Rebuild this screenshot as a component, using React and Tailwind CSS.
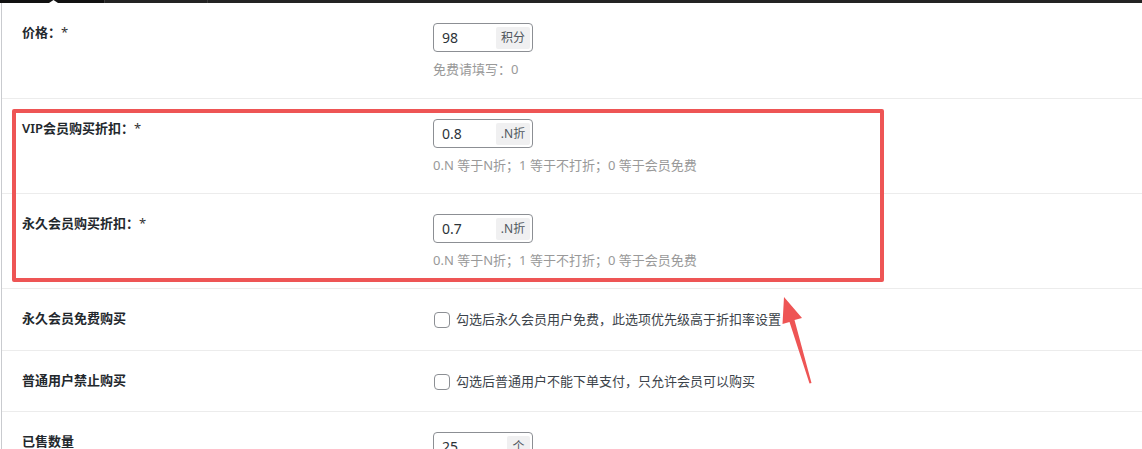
import React from "react";

function Label({ children, req }) {
  return (
    <div className="text-[13px] leading-[18px] font-semibold text-[#23282d] whitespace-nowrap">
      {children}
      {req && <span className="font-normal text-[#333]">*</span>}
    </div>
  );
}

function AddonInput({ value, addon, addonW = "w-[34px]" }) {
  return (
    <div className="w-[100px] h-[29px] border border-[#8c8f94] rounded-[4px] flex items-center justify-between pl-[8px] pr-[2px] bg-white">
      <span className="text-[14px] text-[#2c3338]">{value}</span>
      <span
        className={`${addonW} h-[22px] bg-[#f0f0f1] rounded-[2px] text-[12px] text-[#50575e] flex items-center justify-center`}
      >
        {addon}
      </span>
    </div>
  );
}

function Help({ children }) {
  return <div className="mt-[8px] text-[13px] leading-[18px] text-[#999]">{children}</div>;
}

function CheckItem({ children }) {
  return (
    <div className="flex items-center gap-[6px] h-[22px] ml-px">
      <span className="w-[16px] h-[16px] border border-[#8c8f94] rounded-[4px] bg-white shrink-0" />
      <span className="text-[13px] text-[#3c434a]">{children}</span>
    </div>
  );
}

export default function App() {
  const row = "grid grid-cols-[411px_1fr] pl-5 pt-5 border-b border-[#ececec]";
  return (
    <div
      className="relative w-[1142px] h-[449px] overflow-hidden bg-white"
      style={{ fontFamily: '"Noto Sans", "Noto Sans CJK SC", sans-serif' }}
    >
      {/* top dark tab bar */}
      <div className="relative flex h-[3px] bg-[#232323]">
        <div className="w-[104px] bg-[#111]" />
        <div className="w-[103px] border-l border-[#3a3a3a]" />
        <div className="flex-1 border-l border-[#3a3a3a]" />
        <svg className="absolute left-[49px] top-0" width="9" height="3" viewBox="0 0 9 3">
          <polygon points="4.5,0 9,3 0,3" fill="#fff" />
        </svg>
      </div>

      <div className="ml-px border-l border-[#c9cbcf] h-full">
        {/* 价格 */}
        <div className={`${row} h-[96px]`}>
          <Label req>价格：</Label>
          <div>
            <AddonInput value="98" addon="积分" />
            <Help>免费请填写：0</Help>
          </div>
        </div>

        {/* VIP */}
        <div className={`${row} h-[95px]`}>
          <Label req>VIP会员购买折扣：</Label>
          <div>
            <AddonInput value="0.8" addon=".N折" />
            <Help>0.N 等于N折；1 等于不打折；0 等于会员免费</Help>
          </div>
        </div>

        {/* 永久 */}
        <div className={`${row} h-[95px]`}>
          <Label req>永久会员购买折扣：</Label>
          <div>
            <AddonInput value="0.7" addon=".N折" />
            <Help>0.N 等于N折；1 等于不打折；0 等于会员免费</Help>
          </div>
        </div>

        {/* 永久会员免费购买 */}
        <div className={`${row} h-[62px]`}>
          <Label>永久会员免费购买</Label>
          <CheckItem>勾选后永久会员用户免费，此选项优先级高于折扣率设置</CheckItem>
        </div>

        {/* 普通用户禁止购买 */}
        <div className={`${row} h-[61px]`}>
          <Label>普通用户禁止购买</Label>
          <CheckItem>勾选后普通用户不能下单支付，只允许会员可以购买</CheckItem>
        </div>

        {/* 已售数量 */}
        <div className="grid grid-cols-[411px_1fr] pl-5 pt-5">
          <Label>已售数量</Label>
          <div>
            <AddonInput value="25" addon="个" addonW="w-[23px]" />
          </div>
        </div>
      </div>

      {/* red annotation box */}
      <div className="absolute left-[12px] top-[109px] w-[872px] h-[173px] border-[4px] border-[#ee5555] rounded-[2px] pointer-events-none" />

      {/* red arrow */}
      <svg className="absolute left-0 top-0 pointer-events-none" width="1142" height="449">
        <polygon
          points="784,297 802,318 794.5,320 811.5,383 809.5,383.5 789.5,322 782.5,324"
          fill="#ee5555"
        />
      </svg>
    </div>
  );
}
